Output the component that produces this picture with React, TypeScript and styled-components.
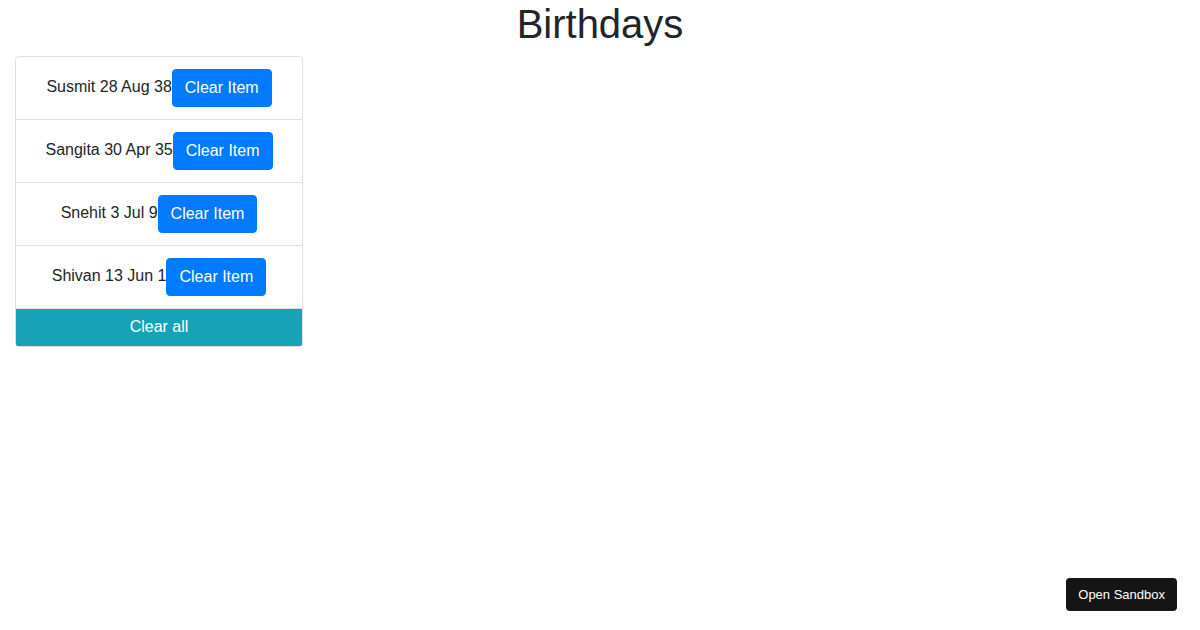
import React from "react";
import styled, { createGlobalStyle } from "styled-components";

const Global = createGlobalStyle`
  * { box-sizing: border-box; }
  body {
    margin: 0;
    font-family: "Liberation Sans", Arial, sans-serif;
    font-size: 16px;
    line-height: 1.5;
    color: #212529;
    background: #fff;
  }
`;

const Title = styled.h1`
  margin: 0 0 8px;
  font-size: 40px;
  font-weight: 500;
  line-height: 1.2;
  text-align: center;
  color: #212529;
`;

const Wrap = styled.div`
  padding: 0 15px;
`;

const Card = styled.div`
  width: 288px;
  border: 1px solid rgba(0, 0, 0, 0.125);
  border-radius: 4px;
  overflow: hidden;
  display: flex;
  flex-direction: column;
`;

const Row = styled.div`
  padding: 12px 20px;
  text-align: center;
  border-bottom: 1px solid rgba(0, 0, 0, 0.125);
`;

const ItemButton = styled.button`
  font-family: inherit;
  font-size: 16px;
  line-height: 1.5;
  padding: 6px 12px;
  border: 1px solid #007bff;
  border-radius: 4px;
  background: #007bff;
  color: #fff;
  vertical-align: middle;
  cursor: pointer;
`;

const ClearAll = styled.button`
  font-family: inherit;
  font-size: 16px;
  line-height: 1.5;
  padding: 6px 12px;
  border: 1px solid #17a2b8;
  border-top: 0;
  background: #17a2b8;
  color: #fff;
  width: 100%;
  cursor: pointer;
`;

const Sandbox = styled.button`
  position: fixed;
  right: 23px;
  bottom: 19px;
  height: 33px;
  padding: 0 12px;
  border: none;
  border-radius: 4px;
  background: #151515;
  color: #fff;
  font-family: "Liberation Sans", Arial, sans-serif;
  font-size: 13px;
`;

const people = [
  "Susmit 28 Aug 38",
  "Sangita 30 Apr 35",
  "Snehit 3 Jul 9",
  "Shivan 13 Jun 1",
];

export default function App() {
  return (
    <>
      <Global />
      <Title>Birthdays</Title>
      <Wrap>
        <Card>
          {people.map((p) => (
            <Row key={p}>
              {p}
              <ItemButton>Clear Item</ItemButton>
            </Row>
          ))}
          <ClearAll>Clear all</ClearAll>
        </Card>
      </Wrap>
      <Sandbox>Open Sandbox</Sandbox>
    </>
  );
}
